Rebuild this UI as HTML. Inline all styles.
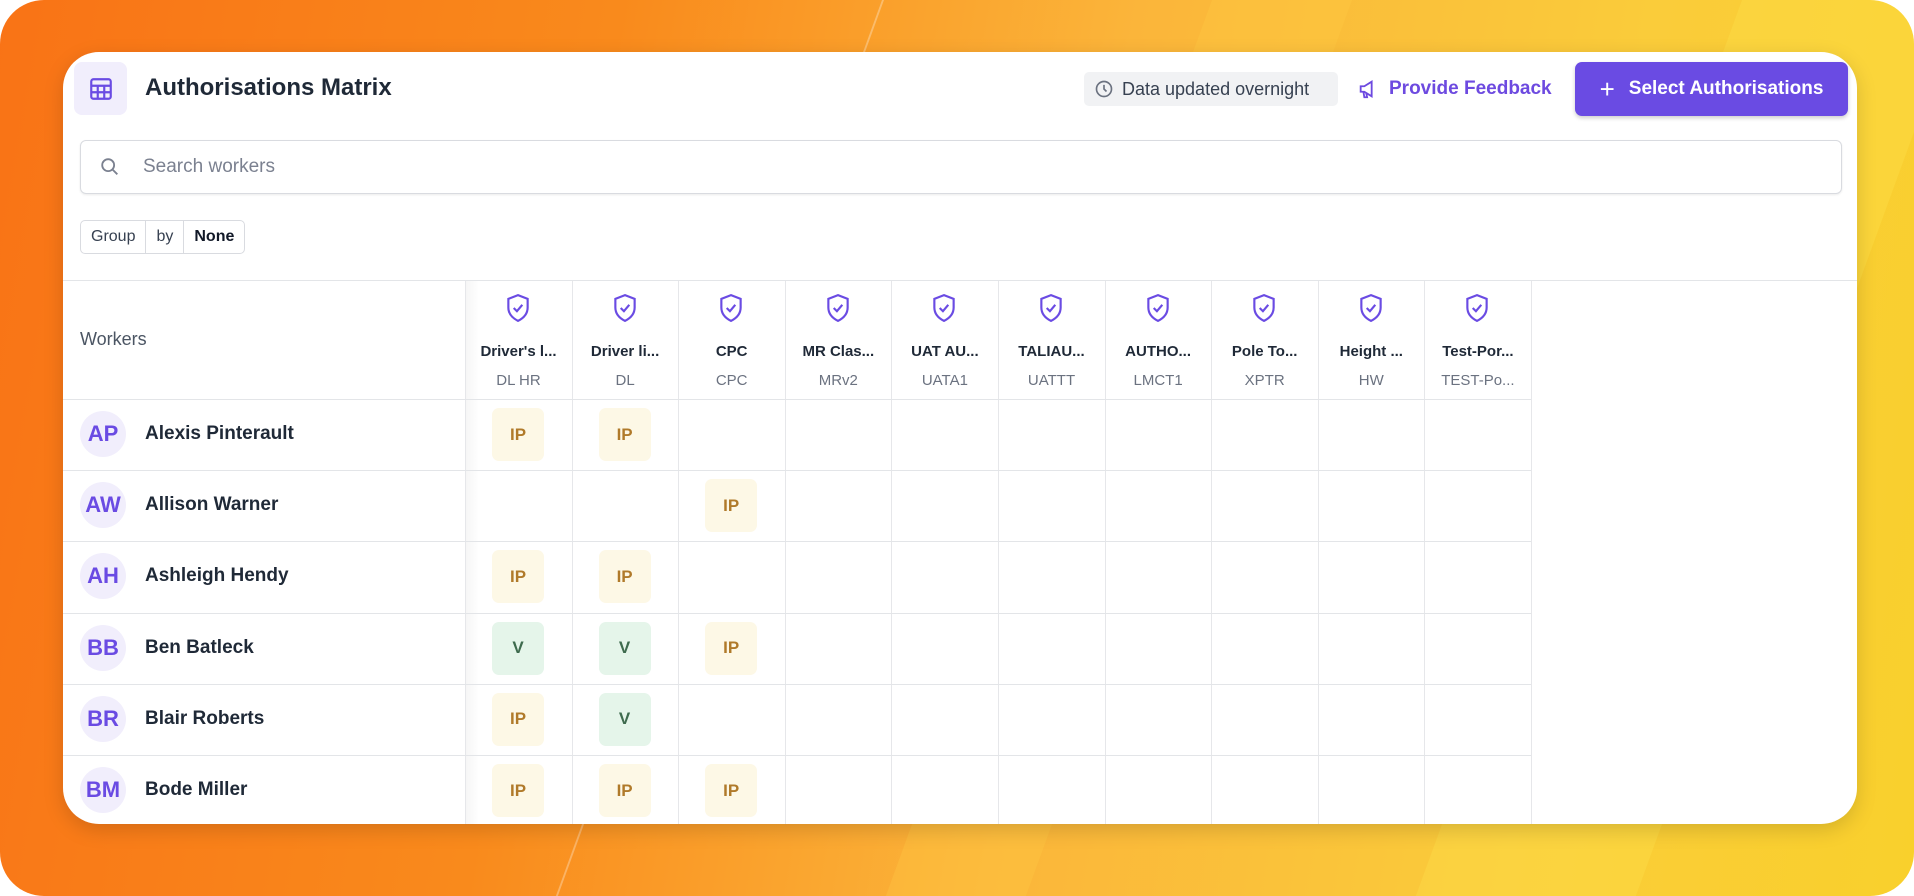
<!DOCTYPE html>
<html><head><meta charset="utf-8"><style>
*{box-sizing:border-box;margin:0;padding:0}
html,body{width:1914px;height:896px;overflow:hidden}
body{background:#fff;font-family:"Liberation Sans",sans-serif;position:relative}
.bg{position:absolute;left:0;top:0;width:1914px;height:896px;border-radius:44px;overflow:hidden;background:linear-gradient(100deg,#F97316 0%,#F98A1C 30%,#FBB53A 55%,#FACC3A 80%,#F9D02C 100%)}
.stripe{position:absolute;top:-100px;height:1200px;transform:skewX(-20deg);}
.card{position:absolute;left:63px;top:52px;width:1794px;height:772px;background:#fff;border-radius:36px;overflow:hidden;box-shadow:0 6px 20px rgba(0,0,0,.15)}
.abs{position:absolute}
.ico{left:11px;top:10px;width:53px;height:53px;background:#F1EEFC;border-radius:8px;display:flex;align-items:center;justify-content:center}
.title{left:82px;top:22px;font-size:24px;font-weight:700;color:#1F2937}
.chip{left:1021px;top:20px;width:254px;height:34px;background:#F1F2F4;border-radius:5px;display:flex;align-items:center;padding-left:10px;font-size:18px;color:#374151;gap:8px}
.fb{left:1294px;top:18px;height:38px;display:flex;align-items:center;gap:10px;font-size:19px;font-weight:700;color:#6D4AE0}
.btn{left:1512px;top:10px;width:273px;height:54px;background:#6A4BE3;border-radius:7px;color:#fff;font-size:19px;font-weight:700;display:flex;align-items:center;justify-content:center;gap:14px;box-shadow:0 2px 4px rgba(0,0,0,.2)}
.search{left:17px;top:88px;width:1762px;height:54px;border:1.5px solid #D9DBE0;border-radius:6px;box-shadow:0 1px 2px rgba(0,0,0,.08);display:flex;align-items:center;padding-left:18px;gap:22px;font-size:19px;color:#7B8190}
.group{left:17px;top:168px;height:34px;border:1px solid #D9DBE0;border-radius:5px;display:flex;font-size:16px;color:#374151}
.group span{padding:0 10px;display:flex;align-items:center;border-right:1px solid #D9DBE0}
.group span:last-child{border:none;font-weight:700;color:#111827}
.hline{left:0;width:1794px;height:1px;background:#E3E5E8}
.vline{top:229px;width:1px;background:#E6E7EA}
.hcell{top:229px;width:107px;height:118px;text-align:center}
.hcell .l{position:absolute;top:62px;left:0;right:0;font-size:15px;font-weight:700;color:#1F2937;white-space:nowrap}
.hcell .c{position:absolute;top:91px;left:0;right:0;font-size:15px;color:#6B7280;white-space:nowrap}
.hcell svg{position:absolute;top:12px;left:40px}
.av{left:17px;width:46px;height:46px;border-radius:50%;background:#F1EEFC;color:#6A4BE3;font-size:22px;font-weight:700;display:flex;align-items:center;justify-content:center}
.nm{left:82px;font-size:19px;font-weight:700;color:#1F2937}
.b{width:52px;height:53px;border-radius:7px;display:flex;align-items:center;justify-content:center;font-size:17px;font-weight:700}
.ip{background:#FDF8E6;color:#B07A2A}
.v{background:#E5F5EA;color:#3E6B4E}
</style></head><body>
<div class="bg">
<div class="stripe" style="left:700px;width:2px;background:rgba(255,255,255,.3)"></div>
<div class="stripe" style="left:1030px;width:140px;background:rgba(255,205,70,.3)"></div>
<div class="stripe" style="left:1560px;width:220px;background:rgba(255,230,80,.3)"></div>
</div>
<div class="card">
<div class="abs ico"><svg width="26" height="26" viewBox="0 0 24 24" fill="none" stroke="#6A4BE3" stroke-width="2"><rect x="3" y="3" width="18" height="18" rx="2"/><path d="M3 9h18M9 9v12M15 9v12M3 15h18"/></svg></div>
<div class="abs title">Authorisations Matrix</div>
<div class="abs chip"><svg width="20" height="20" viewBox="0 0 24 24" fill="none" stroke="#6B7280" stroke-width="2"><circle cx="12" cy="12" r="9"/><path d="M12 7v5l3 3"/></svg>Data updated overnight</div>
<div class="abs fb"><svg width="22" height="22" viewBox="0 0 24 24" fill="none" stroke="#6D4AE0" stroke-width="2"><path d="M4 9h4l8-5v16l-8-5H4z"/><path d="M7 15l1 6h3l-1-5"/></svg>Provide Feedback</div>
<div class="abs btn"><span style="font-size:26px;font-weight:400">+</span>Select Authorisations</div>
<div class="abs search"><svg width="22" height="22" viewBox="0 0 24 24" fill="none" stroke="#7B8190" stroke-width="2"><circle cx="10" cy="10" r="6.5"/><path d="M15 15l5 5"/></svg>Search workers</div>
<div class="abs group"><span>Group</span><span>by</span><span>None</span></div>
<div class="abs hline" style="top:228px"></div>
<div class="abs" style="left:17px;top:277px;font-size:18px;color:#4B5563">Workers</div>
<div class="abs" style="left:402px;top:229px;width:14px;height:543px;background:linear-gradient(90deg,rgba(0,0,0,.04),rgba(0,0,0,0))"></div>
<div id="grid"></div>
</div>
<script>
const g=document.getElementById('grid');let h='';
const cols=[["Driver's l...","DL HR"],["Driver li...","DL"],["CPC","CPC"],["MR Clas...","MRv2"],["UAT AU...","UATA1"],["TALIAU...","UATTT"],["AUTHO...","LMCT1"],["Pole To...","XPTR"],["Height ...","HW"],["Test-Por...","TEST-Po..."]];
const x0=402,w=106.6;
cols.forEach((c,i)=>{const x=x0+i*w;h+=`<div class="abs hcell" style="left:${x}px"><svg width="26" height="30" viewBox="0 0 24 28" fill="none" stroke="#6A4BE3" stroke-width="2"><path d="M12 2l9 3.5v8c0 6-4 10-9 12.5C7 23.5 3 19.5 3 13.5v-8z"/><path d="M8 14l3 3 5-6"/></svg><div class="l">${c[0]}</div><div class="c">${c[1]}</div></div>`});
for(let i=0;i<=10;i++){h+=`<div class="abs vline" style="left:${Math.round(x0+i*w)}px;height:543px"></div>`}
const rows=[["AP","Alexis Pinterault",["IP","IP"]],["AW","Allison Warner",["","","IP"]],["AH","Ashleigh Hendy",["IP","IP"]],["BB","Ben Batleck",["V","V","IP"]],["BR","Blair Roberts",["IP","V"]],["BM","Bode Miller",["IP","IP","IP"]]];
rows.forEach((r,j)=>{const y=347+j*71.2;h+=`<div class="abs hline" style="top:${Math.round(y)}px;width:1468px"></div>`;
h+=`<div class="abs av" style="top:${y+12}px">${r[0]}</div><div class="abs nm" style="top:${y+24}px">${r[1]}</div>`;
r[2].forEach((b,k)=>{if(b)h+=`<div class="abs b ${b=='IP'?'ip':'v'}" style="left:${x0+k*w+27}px;top:${y+9}px">${b}</div>`})});
g.innerHTML=h;
</script>
</body></html>
